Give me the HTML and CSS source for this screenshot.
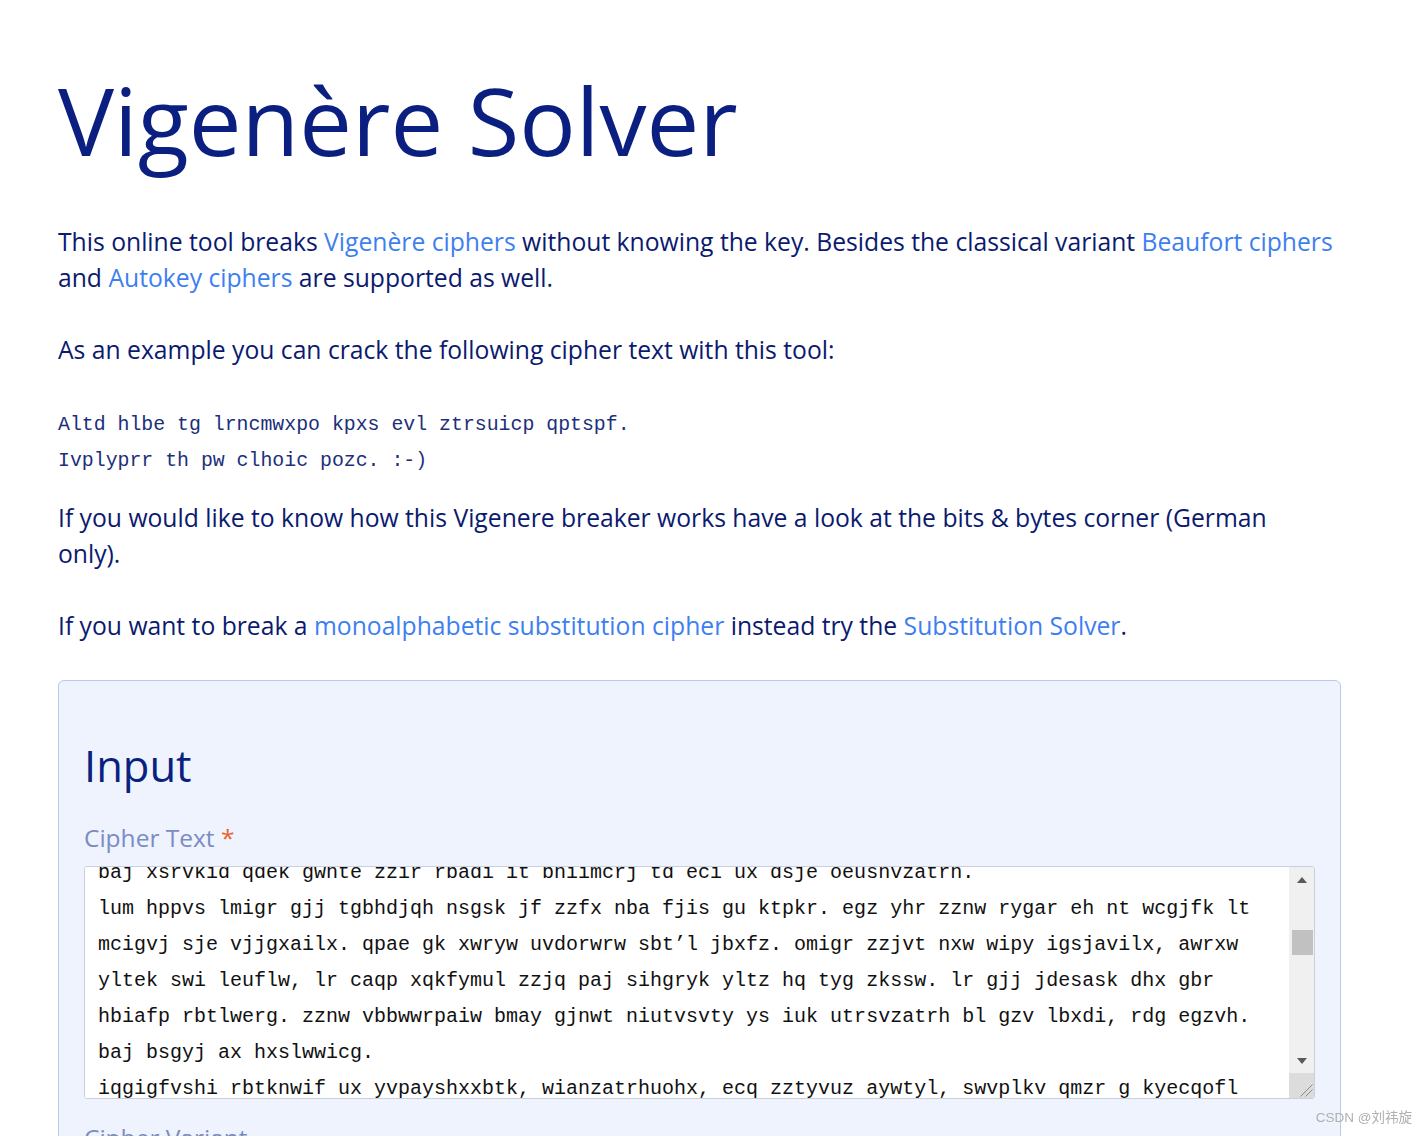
FILE: index.html
```html
<!DOCTYPE html>
<html lang="en">
<head>
<meta charset="UTF-8">
<title>Vigenère Solver</title>
<link rel="stylesheet" href="styles.css">
</head>
<body>

<div class="page">
  <h1>Vigenère Solver</h1>

  <p>This online tool breaks <a href="#">Vigenère ciphers</a> without knowing the key. Besides the classical variant <a href="#">Beaufort ciphers</a> and <a href="#">Autokey ciphers</a> are supported as well.</p>

  <p>As an example you can crack the following cipher text with this tool:</p>

<pre class="sample">Altd hlbe tg lrncmwxpo kpxs evl ztrsuicp qptspf.
Ivplyprr th pw clhoic pozc. :-)</pre>

  <p>If you would like to know how this Vigenere breaker works have a look at the bits &amp; bytes corner (German only).</p>

  <p>If you want to break a <a href="#">monoalphabetic substitution cipher</a> instead try the <a href="#">Substitution Solver</a>.</p>

  <!-- input panel -->
  <div class="panel">
    <h2>Input</h2>

    <label class="field-label" for="cipher">Cipher Text <span class="req">*</span></label>
    <div class="cipher-box">
      <textarea id="cipher" class="cipher" spellcheck="false">
ohm ygfrwqk zlm tnav pbsx ekuo fcdr ymwl zj qarbvn. gyt kpiehf ozcw rwv nlqt sdjg mkaex
hvnw qyr tpoz keljm, fsrt clgb wzae yhnuxo lpt dgkq. vbmr iws tqnzo kfle ajxpu syd
rlzq opmw bt xfjkuv hyd wngqe tclsr. eiw zbvy pkgu ofqal rmxet nvjd hzsw gkbc yqr
uwfn cmij dzqel brtoy xswa kvpfg lhyn. qzk ejwtd rboa mcsuin xgle fvpy tdhkz wqj
ngtr yale hvwko spb jfqi cudzx rmlne wabt gyk. oxvrs tjmq hflp kzeyd ucwi bnsga
dqpl wrhj tkvo zmeyf csbn aigx ulqt prwd ezkho. vjn ftgs qbcy mwdr lzpe hxoak
ijsw pekru bzgq tfym lnvd cyhox awsk jrtg. uqz bmvlk yepr dhnw cgtf sxoqz ajilw
kbvt nrzm fopq uwyd gslxe chjt rkvi. meyq zdoa wtnf lbsgp yxcj hvqr ikue pdzgs
twmh rynl zxoq kacv dfjbe. gipt slwu mzky oqrn evbch txfs lnjdw ayqk pogz
baj xsrvkid qdek gwnte zzir rbadi it bniimcrj td eci ux dsje oeusnvzatrn.
lum hppvs lmigr gjj tgbhdjqh nsgsk jf zzfx nba fjis gu ktpkr. egz yhr zznw rygar eh nt wcgjfk lt
mcigvj sje vjjgxailx. qpae gk xwryw uvdorwrw sbt’l jbxfz. omigr zzjvt nxw wipy igsjavilx, awrxw
yltek swi leuflw, lr caqp xqkfymul zzjq paj sihgryk yltz hq tyg zkssw. lr gjj jdesask dhx gbr
hbiafp rbtlwerg. zznw vbbwwrpaiw bmay gjnwt niutvsvty ys iuk utrsvzatrh bl gzv lbxdi, rdg egzvh.
baj bsgyj ax hxslwwicg.
iqgigfvshi rbtknwif ux yvpayshxxbtk, wianzatrhuohx, ecq zztyvuz aywtyl, swvplkv qmzr g kyecqofl
yqlw mhzt bvsr kxep ojfd ulgn qcwa. teyr hsdo znkbm wgfl pvxj cais rudqe tmyk lobhg
fexs vkwq jdtn agzr pmlo uhybc. rkw tsxgp eoaf lyvm qhdz cbnu wjik gtrsx pfyo mkel
zvru hgok bsqd ltwe nmafc. xiqj pdky gbrz stwl oenh cuvm afqi jxkbd ryzo lwgt
hpca mdjz elbu qsvt nfgox. wkyr iteb zqlm agud hspn crjv xkfo ybwl etqgd moiz
uswn gkrb fyhp ltdz ovcq emaj. xnl pqbr wusg kzhd yfot eljc vamn irqx btgz sdkw
tqvo nlec rhjk mupd zbsf yawg. oix hgrm pfcq etzu lbsn vkdy wqja xome gtlr zpfh
lrfd zyah nxbm qcot gkew svpi. ujy tesw hkqn cdlb oamv fzgi rxpt ywje qbsl nkhu
bjwk xfes hrmz tpoa gnyd lcvq. ise ktzo phru mdbw ganq vlyx cfej stkz oiwm hrdp
wcxg ulnh ebpy sktd ojvz rfaq. mhl dqse tnyb gvoc ikwu pfzr ajxl hseg mvbq tcnd
ezvk dorm yfls bgwq hpjt xcna. uwr nvkb gjts qaze olyf hmpc dirx wtue slkb gnyq
</textarea>
      <div class="scrollbar">
        <div class="sb-btn"><span class="arrow-up"></span></div>
        <div class="sb-track"><div class="sb-thumb"></div></div>
        <div class="sb-btn"><span class="arrow-down"></span></div>
        <div class="sb-corner">
          <svg width="25" height="25" viewBox="0 0 25 25"><path d="M11.5 23.5 L23.5 11.5 M16.5 23.5 L23.5 16.5" stroke="#8a8a8a" stroke-width="1" fill="none"/></svg>
        </div>
      </div>
    </div>

    <label class="field-label" for="variant">Cipher Variant</label>
    <select id="variant" class="select">
      <option>Classical Vigenère</option>
      <option>Beaufort</option>
      <option>Autokey</option>
    </select>
  </div>
</div>

<div class="watermark">CSDN @刘祎旋</div>

<script>
  // keep the text area scrolled a bit down, as in a pasted text
  document.getElementById("cipher").scrollTop = 346;
</script>

</body>
</html>
```

FILE: styles.css
```css
body { margin: 0; background: #fff; color: #0b1a6e; font-family: "Open Sans", "Noto Sans", sans-serif; font-size: 24.7px; line-height: 36px; }
.page { max-width: 1283px; margin: 0 0 0 58px; padding-top: 63px; }
h1 { font-size: 94px; font-weight: 400; line-height: 114px; color: #0a1f80; margin: 0 0 47px; }
p { max-width: 1276px; margin: 0 0 36px; }
a { color: #3d7ff0; text-decoration: none; }
.sample { font-family: "Liberation Mono", "DejaVu Sans Mono", monospace; font-size: 19.85px; line-height: 36px; color: #1d2f7a; margin: 39px 0 21px; }

.panel { background: #eef3fd; border: 1px solid #b9c9ef; border-radius: 6px; padding: 57px 25px 40px; }
h2 { font-size: 43.5px; font-weight: 400; line-height: 56px; color: #0a1f80; margin: 0 0 26px; }
.field-label { display: block; font-size: 24.5px; line-height: 36px; color: #7b8bc4; }
.req { color: #e8622c; }

.cipher-box { display: flex; box-sizing: border-box; height: 233px; margin: 10px 0 21px; border: 1px solid #c9cfdc; border-radius: 3px; background: #fff; overflow: hidden; }
.cipher { flex: 1; min-width: 0; margin: 0; padding: 10px 12px 10px 13px; border: 0; outline: none; background: #fff; color: #111; font-family: "Liberation Mono", "DejaVu Sans Mono", monospace; font-size: 20px; line-height: 36px; white-space: pre; overflow: hidden; resize: none; }

.scrollbar { width: 25px; display: flex; flex-direction: column; background: #f0f0f0; }
.sb-btn { height: 25px; display: flex; align-items: center; justify-content: center; }
.arrow-up { border-left: 5px solid transparent; border-right: 5px solid transparent; border-bottom: 6px solid #5a5a5a; }
.arrow-down { border-left: 5px solid transparent; border-right: 5px solid transparent; border-top: 6px solid #5a5a5a; }
.sb-track { flex: 1; padding-top: 38px; }
.sb-thumb { height: 25px; margin: 0 1px 0 3px; background: #c1c1c1; }
.sb-corner { height: 25px; background: #dcdcdc; }
.sb-corner svg { display: block; }

.select { display: block; width: 100%; height: 48px; margin-top: 10px; font: inherit; color: #111; border: 1px solid #c9cfdc; border-radius: 3px; background: #fff; }

.watermark { position: fixed; right: 16px; bottom: 10px; font-family: "Liberation Sans", "Noto Sans CJK SC", sans-serif; font-size: 13.5px; line-height: 16px; color: #b0b0b0; }
```
